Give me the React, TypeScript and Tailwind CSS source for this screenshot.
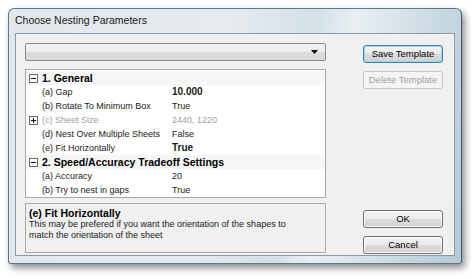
import React from 'react';

type Row =
  | { kind: 'cat'; label: string }
  | { kind: 'prop'; label: string; value: string; bold?: boolean; disabled?: boolean; expandable?: boolean; selected?: boolean };

const rows: Row[] = [
  { kind: 'cat', label: '1. General' },
  { kind: 'prop', label: '(a) Gap', value: '10.000', bold: true },
  { kind: 'prop', label: '(b) Rotate To Minimum Box', value: 'True' },
  { kind: 'prop', label: '(c) Sheet Size', value: '2440, 1220', disabled: true, expandable: true },
  { kind: 'prop', label: '(d) Nest Over Multiple Sheets', value: 'False' },
  { kind: 'prop', label: '(e) Fit Horizontally', value: 'True', bold: true },
  { kind: 'cat', label: '2. Speed/Accuracy Tradeoff Settings' },
  { kind: 'prop', label: '(a) Accuracy', value: '20' },
  { kind: 'prop', label: '(b) Try to nest in gaps', value: 'True' },
];

function ToggleBox({ open }: { open: boolean }) {
  return (
    <svg width="9" height="9" viewBox="0 0 9 9" className="shrink-0">
      <rect x="0.5" y="0.5" width="8" height="8" fill="#fff" stroke="#6b6b6b" />
      <line x1="2" y1="4.5" x2="7" y2="4.5" stroke="#111" />
      {!open && <line x1="4.5" y1="2" x2="4.5" y2="7" stroke="#111" />}
    </svg>
  );
}

function Button({ label, focused, disabled }: { label: string; focused?: boolean; disabled?: boolean }) {
  const base = 'w-[80px] h-[18px] rounded-[3px] text-[9.5px] flex items-center justify-center';
  if (disabled) {
    return <div className={`${base} border border-[#c3c7ca] bg-[#f4f4f4] text-[#a3a3a3]`}>{label}</div>;
  }
  return (
    <div
      className={`${base} border text-black bg-[linear-gradient(#f4f4f4_0%,#ebebeb_48%,#dcdcdc_52%,#d2d2d2_100%)] ${
        focused ? 'border-[#3c7fb1] shadow-[inset_0_0_0_1px_#9cd6f0]' : 'border-[#707070] shadow-[inset_0_0_0_1px_#fcfcfc]'
      }`}
    >
      {label}
    </div>
  );
}

export default function App() {
  return (
    <div className="w-[474px] h-[279px] bg-white pl-[8px] pt-[8px] font-['Liberation_Sans',Arial,sans-serif] text-black">
      <div className="w-[454px] h-[256px] flex flex-col rounded-t-[6px] rounded-b-[3px] border border-[#5d7887] border-r-[#3f5c6b] bg-[linear-gradient(100deg,#e2e7ec_0%,#e6ebef_45%,#d3e0e8_62%,#e9eff3_70%,#c7d8e2_88%,#b4cad6_100%)] shadow-[3px_4px_7px_rgba(0,0,0,0.45)]">
        {/* title bar */}
        <div className="h-[24px] pl-[6px] flex items-center text-[10.5px] text-[#1a1a1a]">Choose Nesting Parameters</div>

        {/* client area */}
        <div className="mx-[6px] h-[223px] border border-[#8b9aa4] bg-[#f0f0f0] flex pl-[9px] pr-[11px] pt-[9px] gap-[37px]">
          <div className="w-[301px] flex flex-col">
            {/* combo */}
            <div className="h-[18px] rounded-[2px] border border-[#8a8a8a] bg-[linear-gradient(#f3f3f3_0%,#ececec_48%,#dedede_52%,#d6d6d6_100%)] flex items-center justify-end pr-[7px]">
              <svg width="7" height="4" viewBox="0 0 7 4">
                <path d="M0 0 H7 L3.5 4 Z" fill="#111" />
              </svg>
            </div>

            {/* property grid */}
            <div className="mt-[8px] h-[129px] border border-[#a9a9a9] bg-white pt-[1px]">
              {rows.map((r, i) =>
                r.kind === 'cat' ? (
                  <div key={i} className="h-[14px] flex items-center bg-[#f4f6f8]">
                    <div className="w-[16px] pl-[3px] flex items-center">
                      <ToggleBox open />
                    </div>
                    <span className="text-[10.5px] font-bold leading-none">{r.label}</span>
                  </div>
                ) : (
                  <div key={i} className="h-[14px] flex items-center">
                    <div className="w-[16px] pl-[3px] flex items-center">{r.expandable && <ToggleBox open={false} />}</div>
                    <span className={`w-[130px] text-[9px] leading-none whitespace-nowrap ${r.disabled ? 'text-[#a0a0a0]' : 'text-[#1a1a1a]'}`}>
                      {r.label}
                    </span>
                    <span
                      className={`leading-none whitespace-nowrap ${r.bold ? 'text-[10px] font-bold' : 'text-[9px]'} ${
                        r.disabled ? 'text-[#a0a0a0]' : 'text-[#1a1a1a]'
                      }`}
                    >
                      {r.value}
                    </span>
                  </div>
                ),
              )}
            </div>

            {/* description */}
            <div className="mt-[5px] h-[50px] border border-[#a9a9a9] bg-[#f0f0f0] pl-[3px] pt-[3px]">
              <div className="text-[10.5px] font-bold leading-[12px]">(e) Fit Horizontally</div>
              <div className="text-[9px] leading-[11px] text-[#1a1a1a]">
                This may be prefered if you want the orientation of the shapes to
                <br />
                match the orientation of the sheet
              </div>
            </div>
          </div>

          <div className="w-[80px] flex flex-col pt-[2px] pb-[1px]">
            <Button label="Save Template" focused />
            <div className="mt-[8px]">
              <Button label="Delete Template" disabled />
            </div>
            <div className="flex-1" />
            <Button label="OK" />
            <div className="mt-[8px]">
              <Button label="Cancel" />
            </div>
          </div>
        </div>
      </div>
    </div>
  );
}
